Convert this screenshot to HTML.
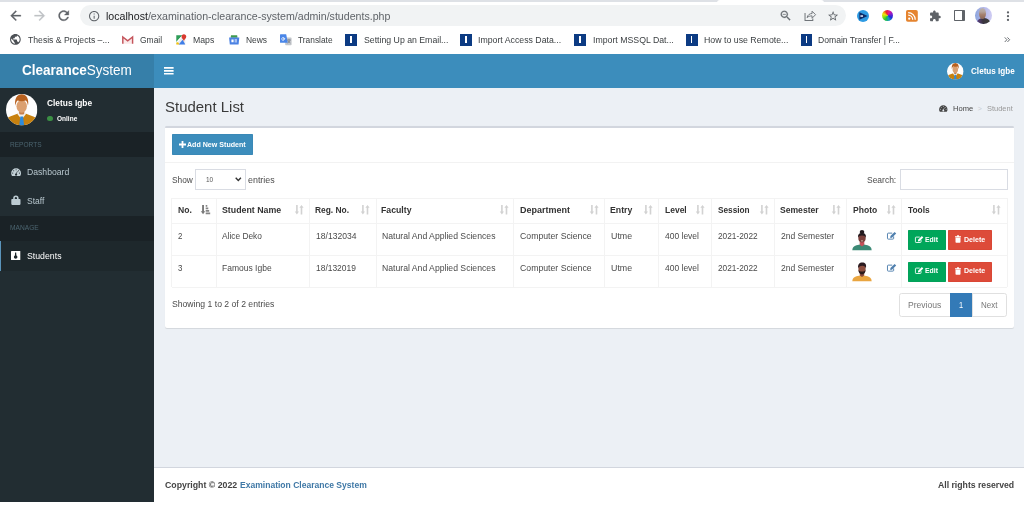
<!DOCTYPE html>
<html>
<head>
<meta charset="utf-8">
<title>Student List</title>
<style>
*{box-sizing:border-box;margin:0;padding:0}
html,body{width:1024px;height:523px;overflow:hidden;background:#fff}
body{font-family:"Liberation Sans",sans-serif;font-size:9px;color:#333;position:relative}
.a{position:absolute}
.t{position:absolute;white-space:nowrap;line-height:12px;height:12px;transform-origin:0 50%}
svg{position:absolute;overflow:visible}
b{font-weight:bold}

.fav{position:absolute;top:33.8px;width:11.8px;height:11.8px;background:#0c3b83}
.fav:after{content:"";position:absolute;left:5px;top:2.2px;width:1.7px;height:7.4px;background:#fff}
</style>
</head>
<body>

<div class="a" style="left:0;top:0;width:1024px;height:2.4px;background:#dee1e6"></div>
<div class="a" style="left:717px;top:0;width:107px;height:3px;background:#fff;border-radius:3px 3px 0 0"></div>
<div class="a" style="left:80px;top:5.4px;width:766.4px;height:20.8px;border-radius:10.4px;background:#f1f3f4"></div>
<div class="a" style="left:0;top:54px;width:154px;height:33.8px;background:#367fa9"></div>
<div class="a" style="left:154px;top:54px;width:870px;height:33.8px;background:#3c8dbc"></div>
<div class="a" style="left:0;top:87.8px;width:154px;height:413.900px;background:#222d32"></div>
<div class="a" style="left:154px;top:87.8px;width:870px;height:380px;background:#ecf0f5"></div>
<div class="a" style="left:154px;top:467.4px;width:870px;height:33.8px;background:#fff;border-top:1px solid #d2d6de"></div>
<div class="a" style="left:0;top:131.6px;width:154px;height:25px;background:#1a2226"></div>
<div class="a" style="left:0;top:216.2px;width:154px;height:25px;background:#1a2226"></div>
<div class="a" style="left:0;top:241.2px;width:154px;height:29.6px;background:#1e282c;border-left:1.4px solid #5a94bb"></div>
<div class="a" style="left:164.8px;top:126px;width:849px;height:202px;background:#fff;border-top:2px solid #d2d6de;border-radius:2px;box-shadow:0 0.7px 0.7px rgba(0,0,0,.1)"></div>
<div class="a" style="left:164.8px;top:162px;width:849px;height:0.8px;background:#f2f2f2"></div>
<div class="a" style="left:172.1px;top:134.3px;width:80.7px;height:20.9px;background:#3c8dbc;border:0.7px solid #3a89b7;border-radius:0.8px"></div>
<div class="a" style="left:195.2px;top:169px;width:50.5px;height:20.600px;background:#fff;border:0.8px solid #d9dce3"></div>
<div class="a" style="left:899.6px;top:169px;width:108px;height:20.600px;background:#fff;border:0.8px solid #d9dce3"></div>

<div class="a" style="left:171.25px;top:197.7px;width:0.8px;height:89.8px;background:#f3f3f3"></div>
<div class="a" style="left:216.15px;top:197.7px;width:0.8px;height:89.8px;background:#f3f3f3"></div>
<div class="a" style="left:308.85px;top:197.7px;width:0.8px;height:89.8px;background:#f3f3f3"></div>
<div class="a" style="left:376.25px;top:197.7px;width:0.8px;height:89.8px;background:#f3f3f3"></div>
<div class="a" style="left:513.45px;top:197.7px;width:0.8px;height:89.8px;background:#f3f3f3"></div>
<div class="a" style="left:604.35px;top:197.7px;width:0.8px;height:89.8px;background:#f3f3f3"></div>
<div class="a" style="left:657.75px;top:197.7px;width:0.8px;height:89.8px;background:#f3f3f3"></div>
<div class="a" style="left:710.85px;top:197.7px;width:0.8px;height:89.8px;background:#f3f3f3"></div>
<div class="a" style="left:774.05px;top:197.7px;width:0.8px;height:89.8px;background:#f3f3f3"></div>
<div class="a" style="left:845.85px;top:197.7px;width:0.8px;height:89.8px;background:#f3f3f3"></div>
<div class="a" style="left:901.45px;top:197.7px;width:0.8px;height:89.8px;background:#f3f3f3"></div>
<div class="a" style="left:1006.95px;top:197.7px;width:0.8px;height:89.8px;background:#f3f3f3"></div>
<div class="a" style="left:171.6px;top:197.7px;width:835.8px;height:0.8px;background:#f3f3f3"></div>
<div class="a" style="left:171.6px;top:222.6px;width:835.8px;height:1.4px;background:#f3f3f3"></div>
<div class="a" style="left:171.6px;top:255px;width:835.8px;height:0.8px;background:#f3f3f3"></div>
<div class="a" style="left:171.6px;top:287.2px;width:835.8px;height:0.8px;background:#f3f3f3"></div>
<div class="a" style="left:908px;top:229.8px;width:38px;height:20.2px;background:#00a65a;border:0.7px solid #03a15a;border-radius:0.8px"></div>
<div class="a" style="left:947.5px;top:229.8px;width:44.600px;height:20.2px;background:#dd4b39;border:0.7px solid #da4735;border-radius:0.8px"></div>
<div class="a" style="left:908px;top:261.5px;width:38px;height:20.2px;background:#00a65a;border:0.7px solid #03a15a;border-radius:0.8px"></div>
<div class="a" style="left:947.5px;top:261.5px;width:44.600px;height:20.2px;background:#dd4b39;border:0.7px solid #da4735;border-radius:0.8px"></div>


<div class="a" style="left:899.4px;top:293.2px;width:107.3px;height:23.4px;background:#fff;border:0.8px solid #e0e0e0;border-radius:2.6px"></div>
<div class="a" style="left:950px;top:293.2px;width:22.2px;height:23.4px;background:#337ab7"></div>
<div class="a" style="left:972.2px;top:293.2px;width:0.8px;height:23.4px;background:#e0e0e0"></div>

<svg style="left:8.00px;top:8.00px" width="15.4" height="15.4" viewBox="0 0 24 24"><path fill="#5f6368" stroke="#5f6368" stroke-width="0.5" d="M20 11H7.83l5.59-5.59L12 4l-8 8 8 8 1.41-1.41L7.83 13H20v-2z"/></svg>
<svg style="left:32.00px;top:8.00px" width="15.4" height="15.4" viewBox="0 0 24 24"><path fill="#bfc2c6" stroke="#bfc2c6" stroke-width="0.5" d="M12 4l-1.41 1.41L16.17 11H4v2h12.17l-5.58 5.59L12 20l8-8z"/></svg>
<svg style="left:56.30px;top:8.00px" width="15.4" height="15.4" viewBox="0 0 24 24"><path fill="#5f6368" stroke="#5f6368" stroke-width="0.5" d="M17.65 6.35C16.2 4.9 14.21 4 12 4c-4.42 0-7.99 3.58-7.99 8s3.57 8 7.99 8c3.73 0 6.84-2.55 7.73-6h-2.08c-.82 2.33-3.04 4-5.65 4-3.31 0-6-2.69-6-6s2.69-6 6-6c1.66 0 3.14.69 4.22 1.78L13 11h7V4l-2.35 2.35z"/></svg>
<svg style="left:87.95px;top:9.75px" width="12.3" height="12.3" viewBox="0 0 24 24"><path fill="#5f6368" stroke="#5f6368" stroke-width="0" d="M11 17h2v-6h-2v6zm1-15C6.48 2 2 6.48 2 12s4.48 10 10 10 10-4.48 10-10S17.52 2 12 2zm0 18c-4.41 0-8-3.59-8-8s3.59-8 8-8 8 3.59 8 8-3.59 8-8 8zM11 9h2V7h-2v2z"/></svg>
<svg style="left:778.80px;top:9.00px" width="13.4" height="13.4" viewBox="0 0 24 24"><path fill="#6a6f74" stroke="#6a6f74" stroke-width="0.4" d="M15.5 14h-.79l-.28-.27C15.41 12.59 16 11.11 16 9.5 16 5.91 13.09 3 9.5 3S3 5.91 3 9.5 5.91 16 9.5 16c1.61 0 3.09-.59 4.23-1.57l.27.28v.79l5 4.99L20.49 19l-4.99-5zm-6 0C7.01 14 5 11.99 5 9.5S7.01 5 9.5 5 14 7.01 14 9.5 11.99 14 9.5 14zM7 9h5v1H7z"/></svg>
<svg style="left:802.6px;top:9px" width="14.8" height="14" viewBox="0 0 16 14" preserveAspectRatio="none"><path d="M2.2 4v7.5h8.4V9.6" fill="none" stroke="#70757a" stroke-width="1.1"/><path d="M4.4 8.6C5 5.9 7.2 4.6 9.8 4.5V2.2l3.8 3.5-3.8 3.5V6.9C7.7 6.9 5.9 7.3 4.4 8.6z" fill="none" stroke="#70757a" stroke-width="1" stroke-linejoin="round"/></svg>
<svg style="left:827.40px;top:10.00px" width="12.2" height="12.2" viewBox="0 0 24 24"><path fill="#5f6368" stroke="#5f6368" stroke-width="0" d="M22 9.24l-7.19-.62L12 2 9.19 8.63 2 9.24l5.46 4.73L5.82 21 12 17.27 18.18 21l-1.63-7.03L22 9.24zM12 15.4l-3.76 2.27 1-4.28-3.32-2.88 4.38-.38L12 6.1l1.71 4.04 4.38.38-3.32 2.88 1 4.28L12 15.4z"/></svg>
<svg style="left:857.3px;top:9.6px" width="12" height="12" viewBox="0 0 12 12"><circle cx="6" cy="6" r="6" fill="#2e9be3"/><path d="M2.4 2.2L10.6 6 2.4 9.8z" fill="#0d2a66"/><rect x="3.4" y="5.3" width="2.6" height="1.5" fill="#e8eefc"/></svg>
<div class="a" style="left:881.9px;top:10.1px;width:10.9px;height:10.9px;border-radius:50%;background:conic-gradient(from -20deg,#e8202a,#e0189a 14%,#7a1fd0 26%,#1a2fd8 38%,#1596c8 50%,#18c040 62%,#9adf10 76%,#f2e010 86%,#f08a18 94%,#e8202a)"></div>
<svg style="left:905.5px;top:9.9px" width="11.8" height="11.8" viewBox="0 0 12 12"><rect width="12" height="12" rx="1.8" fill="#e5842f"/><circle cx="3.3" cy="8.8" r="1.15" fill="#fff"/><path d="M2.2 5.2a4.6 4.6 0 0 1 4.6 4.6M2.2 2.6a7.2 7.2 0 0 1 7.2 7.2" fill="none" stroke="#fff" stroke-width="1.3"/></svg>
<svg style="left:929.05px;top:9.65px" width="12.3" height="12.3" viewBox="0 0 24 24"><path fill="#5f6368" stroke="#5f6368" stroke-width="0" d="M20.5 11H19V7c0-1.1-.9-2-2-2h-4V3.5C13 2.12 11.88 1 10.5 1S8 2.12 8 3.5V5H4c-1.1 0-1.99.9-1.99 2v3.8H3.5c1.49 0 2.7 1.21 2.7 2.7s-1.21 2.7-2.7 2.7H2V20c0 1.1.9 2 2 2h3.8v-1.5c0-1.49 1.21-2.7 2.7-2.7 1.49 0 2.7 1.21 2.7 2.7V22H17c1.1 0 2-.9 2-2v-4h1.5c1.38 0 2.5-1.12 2.5-2.5S21.88 11 20.5 11z"/></svg>
<div class="a" style="left:954px;top:10.4px;width:11px;height:10.5px;border:1.4px solid #5f6368;border-right-width:3.6px;border-radius:0.8px"></div>
<div class="a" style="left:975.1px;top:7.4px;width:16.7px;height:16.7px;border-radius:50%;overflow:hidden;background:linear-gradient(90deg,#8ea6dd,#b4b8ea 55%,#d0cdf3)"><div class="a" style="left:1.800px;top:11px;width:13.400px;height:9px;border-radius:50% 50% 0 0;background:linear-gradient(90deg,#5f4285,#3a3340 45%,#3f4038)"></div><div class="a" style="left:3.900px;top:0.700px;width:7.400px;height:11.400px;border-radius:50%;background:linear-gradient(#bdb3b0,#b3a29b 35%,#a5806f 60%,#8b6858)"></div></div>
<svg style="left:1006px;top:10px" width="4" height="12" viewBox="0 0 4 12"><circle cx="2" cy="2.400" r="1.150" fill="#5f6368"/><circle cx="2" cy="6.200" r="1.150" fill="#5f6368"/><circle cx="2" cy="9.950" r="1.150" fill="#5f6368"/></svg>
<svg style="left:9.20px;top:33.10px" width="12.8" height="12.8" viewBox="0 0 24 24"><path fill="#4d5156" stroke="#4d5156" stroke-width="0" d="M12 2C6.48 2 2 6.48 2 12s4.48 10 10 10 10-4.48 10-10S17.52 2 12 2zm-1 17.93c-3.95-.49-7-3.85-7-7.93 0-.62.08-1.21.21-1.79L9 15v1c0 1.1.9 2 2 2v1.93zm6.9-2.54c-.26-.81-1-1.39-1.9-1.39h-1v-3c0-.55-.45-1-1-1H8v-2h2c.55 0 1-.45 1-1V7h2c1.1 0 2-.9 2-2v-.41c2.93 1.19 5 4.06 5 7.41 0 2.08-.8 3.97-2.1 5.39z"/></svg>
<svg style="left:121.700px;top:35.900px" width="11.400" height="7.900" viewBox="0 0 11.400 7.900"><path d="M0.800 7.700V0.900L5.700 4.700 10.600 0.900V7.700z" fill="#fbeaea"/><path d="M0.800 7.800V1L5.700 4.800 10.600 1V7.800" fill="none" stroke="#c4545b" stroke-width="1.450" stroke-linejoin="miter"/></svg>
<svg style="left:176px;top:34.200px" width="10.400" height="10.600" viewBox="0 0 10.400 10.600"><path d="M0.300 1.300h9v9.100h-9z" fill="#e9ebee"/><path d="M0.300 1.300h6L0.300 7.900z" fill="#2f9e58"/><path d="M0.300 8.800l1.200-1.300 2.200 2.900H0.300z" fill="#f4c20d"/><path d="M2.700 10.400L6.600 5.800 9.300 10.400z" fill="#3f7ee8"/><path d="M0.300 8L6.300 1.300h1.300L1 8.800z" fill="#fff"/><path d="M7.900 0.200c1.400 0 2.400 1 2.400 2.300 0 1.600-1.800 2.800-2.400 4.400C7.300 5.300 5.500 4.100 5.500 2.500 5.500 1.200 6.500 0.200 7.900 0.200z" fill="#d93a2f"/></svg>
<svg style="left:228.5px;top:34.9px" width="10.4" height="9.8" viewBox="0 0 10.4 9.8"><path d="M2 0.2h6.2l0.3 2.6H1.7z" fill="#3f9a4e"/><path d="M0.1 2.4h10.2L9.6 9.6H0.8z" fill="#4b82e3"/><path d="M2.4 4.6h2.2v2.6H2.4zM5.6 4.6h2.4v0.8H5.6zM5.6 6.4h2.4v0.8H5.6z" fill="#fff"/></svg>
<svg style="left:279.8px;top:33.9px" width="11.8" height="11.4" viewBox="0 0 11.8 11.4"><rect x="5.2" y="3.6" width="6.4" height="7.6" rx="0.8" fill="#c3c6cb"/><path d="M0.6 0.2h5.6l1.6 8.6H0.6a0.6 0.6 0 0 1-.6-.6V0.8a0.6 0.6 0 0 1 .6-.6z" fill="#4a86e8"/><path d="M5.2 4.4H3.6v0.9h0.8c-.1.6-.6 1-1.2 1a1.4 1.4 0 1 1 .9-2.4" fill="none" stroke="#fff" stroke-width="0.8"/><path d="M7.2 6h3.6M9 5.2v0.8M8 6.4c.4 1.2 1.2 2 2.4 2.6M10 6.2c-.3 1.2-1.100 2.200-2.400 2.900" fill="none" stroke="#6b6f76" stroke-width="0.6"/></svg>
<div class="fav" style="left:345.1px"></div>
<div class="fav" style="left:460.1px"></div>
<div class="fav" style="left:574.2px"></div>
<div class="fav" style="left:685.8px"></div>
<div class="fav" style="left:800.5px"></div>
<svg style="left:1003.6px;top:37.2px" width="6.4" height="5.4" viewBox="0 0 7 6.4"><path d="M0.6 0.5L3.2 3.2 0.6 5.9M3.8 0.5L6.4 3.2 3.8 5.9" fill="none" stroke="#5f6368" stroke-width="1.1"/></svg>
<svg style="left:164.4px;top:66.9px" width="9.6" height="7.8" viewBox="0 0 9.6 7.8"><path d="M0 0h9.600v1.700H0zM0 2.950h9.600v1.700H0zM0 5.900h9.600v1.700H0z" fill="#fff"/></svg>
<svg style="left:5.7px;top:94.2px" width="31.4" height="31.4" viewBox="0 0 31.4 31.4"><defs><clipPath id="c1"><circle cx="15.7" cy="15.7" r="15.7"/></clipPath></defs><g clip-path="url(#c1)"><rect width="31.4" height="31.4" fill="#fdfdfd"/><path d="M1.5 31.4V25.5c0-1.800 1-2.600 2.600-3.100L12 19.600h7.400l7.900 2.800c1.600.5 2.600 1.300 2.600 3.100v5.900z" fill="#c8810e"/><path d="M11.200 19.800l4.500 5.600 4.500-5.600-1.200-1.500h-6.600z" fill="#f4f1ec"/><path d="M14.300 22.400h2.800l1 9h-4.800z" fill="#2f8bdb"/><rect x="13.100" y="16" width="5.200" height="4.600" rx="1.500" fill="#c57f4c"/><ellipse cx="15.700" cy="12.300" rx="5.200" ry="6.400" fill="#dba070"/><path d="M9.400 11.800C8.200 5.500 10.500 0.200 15.700 0.200s7.500 5.300 6.300 11.600c-.3-2.600-1.100-4.300-2.200-5.200-2.400.8-5.800.8-8.200 0-1.100.9-1.900 2.600-2.200 5.200z" fill="#b8611f"/></g></svg>
<svg style="left:946.7px;top:63.2px" width="16.6" height="16.6" viewBox="0 0 31.4 31.4"><defs><clipPath id="c2"><circle cx="15.7" cy="15.7" r="15.7"/></clipPath></defs><g clip-path="url(#c2)"><rect width="31.4" height="31.4" fill="#fdfdfd"/><path d="M1.5 31.4V25.5c0-1.800 1-2.600 2.600-3.100L12 19.600h7.400l7.900 2.800c1.600.5 2.600 1.300 2.600 3.100v5.900z" fill="#c8810e"/><path d="M11.200 19.800l4.500 5.600 4.500-5.600-1.200-1.500h-6.600z" fill="#f4f1ec"/><path d="M14.300 22.400h2.800l1 9h-4.800z" fill="#2f8bdb"/><rect x="13.100" y="16" width="5.200" height="4.600" rx="1.500" fill="#c57f4c"/><ellipse cx="15.700" cy="12.300" rx="5.200" ry="6.400" fill="#dba070"/><path d="M9.400 11.800C8.200 5.500 10.500 0.200 15.700 0.200s7.500 5.300 6.300 11.600c-.3-2.600-1.100-4.300-2.200-5.200-2.400.8-5.800.8-8.200 0-1.100.9-1.900 2.600-2.200 5.200z" fill="#b8611f"/></g></svg>
<div class="a" style="left:46.9px;top:115.500px;width:5.700px;height:5.700px;border-radius:50%;background:#3b8f44"></div>
<svg style="left:11.2px;top:167.8px" width="10.2" height="8" viewBox="0 0 14 11"><path d="M7 0.300A6.800 6.800 0 0 0 0.200 7.100c0 1.300.4 2.500 1 3.500.1.200.3.300.500.300h10.600c.2 0 .4-.1.500-.3.600-1 1-2.200 1-3.500A6.800 6.800 0 0 0 7 .3z" fill="#c2d0d6"/><g fill="#222d32"><circle cx="2.400" cy="7" r=".75"/><circle cx="3.700" cy="3.800" r=".75"/><circle cx="7" cy="2.500" r=".75"/><circle cx="10.300" cy="3.800" r=".75"/><circle cx="11.600" cy="7" r=".75"/><path d="M8.400 4.200l-1.300 3.300a1.500 1.500 0 1 0 .8.300l1.200-3.400z"/></g></svg>
<svg style="left:939.4px;top:104.8px" width="8.6" height="6.8" viewBox="0 0 14 11"><path d="M7 0.300A6.800 6.800 0 0 0 0.200 7.100c0 1.300.4 2.500 1 3.500.1.200.3.300.500.300h10.600c.2 0 .4-.1.500-.3.600-1 1-2.200 1-3.500A6.800 6.800 0 0 0 7 .3z" fill="#444"/><g fill="#ecf0f5"><circle cx="2.400" cy="7" r=".75"/><circle cx="3.700" cy="3.800" r=".75"/><circle cx="7" cy="2.500" r=".75"/><circle cx="10.300" cy="3.800" r=".75"/><circle cx="11.600" cy="7" r=".75"/><path d="M8.400 4.200l-1.300 3.300a1.500 1.500 0 1 0 .8.300l1.200-3.400z"/></g></svg>
<svg style="left:11.2px;top:195px" width="9.8" height="10" viewBox="0 0 9.8 10"><path d="M3 4.400V3.100a1.900 1.900 0 0 1 3.800 0v1.300" fill="none" stroke="#bccbd2" stroke-width="1.600"/><rect x="0.300" y="3.900" width="9.200" height="6" rx="0.800" fill="#bccbd2"/></svg>
<svg style="left:10.9px;top:250.800px" width="9.300" height="9" viewBox="0 0 9.300 9"><rect width="9.300" height="9" rx="0.500" fill="#fff"/><path d="M4.100 1.500h1.100l.2 3.100c.6.300 1 .8 1 1.500 0 .9-.8 1.600-1.750 1.600S2.900 7 2.900 6.100c0-.7.400-1.200 1-1.500z" fill="#1e282c"/></svg>
<div class="t" style="left:977.8px;top:103.300px;font-size:7px;color:#c8ccd2">&gt;</div>
<svg style="left:179px;top:141.400px" width="7" height="7" viewBox="0 0 7 7"><path d="M2.600 0h1.800v2.600H7v1.800H4.400V7H2.600V4.400H0V2.600h2.600z" fill="#fff"/></svg>
<svg style="left:235.200px;top:177.200px" width="6.600" height="4.600" viewBox="0 0 6.600 4.600"><path d="M0.700 0.800L3.300 3.500 5.900 0.800" fill="none" stroke="#333" stroke-width="1.400"/></svg>
<svg style="left:201.4px;top:204.900px" width="9.200" height="9.200" viewBox="0 0 9.200 9.200"><path d="M1.100 0h1.900v6.300h1.300L2.050 9.200 -0.200 6.300h1.300z" fill="#7a7a7a"/><path d="M4.700 0.100h1.600v1.600H4.700zM4.700 2.600h2.600v1.600H4.700zM4.700 5.100h3.500v1.600H4.700zM4.700 7.600h4.500v1.600H4.700z" fill="#858585"/></svg>
<svg style="left:295.2px;top:204.900px" width="8.400" height="9.400" viewBox="0 0 8.400 9.400"><path d="M1.100 0h1.600v6.600h1.300L1.900 9.400 -0.200 6.600h1.300z" fill="#d2d2d2"/><path d="M5.700 9.400h1.600V2.800h1.300L6.500 0 4.400 2.800h1.300z" fill="#d2d2d2"/></svg>
<svg style="left:361.4px;top:204.900px" width="8.400" height="9.400" viewBox="0 0 8.400 9.400"><path d="M1.100 0h1.600v6.600h1.300L1.900 9.400 -0.200 6.600h1.300z" fill="#d2d2d2"/><path d="M5.700 9.400h1.600V2.800h1.300L6.500 0 4.400 2.800h1.300z" fill="#d2d2d2"/></svg>
<svg style="left:499.6px;top:204.900px" width="8.400" height="9.400" viewBox="0 0 8.400 9.400"><path d="M1.100 0h1.600v6.600h1.300L1.900 9.400 -0.200 6.600h1.300z" fill="#d2d2d2"/><path d="M5.700 9.400h1.600V2.800h1.300L6.500 0 4.400 2.800h1.300z" fill="#d2d2d2"/></svg>
<svg style="left:590.2px;top:204.900px" width="8.400" height="9.400" viewBox="0 0 8.400 9.400"><path d="M1.100 0h1.600v6.600h1.300L1.900 9.400 -0.200 6.600h1.300z" fill="#d2d2d2"/><path d="M5.700 9.400h1.600V2.800h1.300L6.500 0 4.400 2.800h1.300z" fill="#d2d2d2"/></svg>
<svg style="left:644.2px;top:204.900px" width="8.400" height="9.400" viewBox="0 0 8.400 9.400"><path d="M1.100 0h1.600v6.600h1.300L1.900 9.400 -0.200 6.600h1.300z" fill="#d2d2d2"/><path d="M5.700 9.400h1.600V2.800h1.300L6.500 0 4.400 2.800h1.300z" fill="#d2d2d2"/></svg>
<svg style="left:696.4px;top:204.900px" width="8.400" height="9.400" viewBox="0 0 8.400 9.400"><path d="M1.100 0h1.600v6.600h1.300L1.900 9.400 -0.200 6.600h1.300z" fill="#d2d2d2"/><path d="M5.700 9.400h1.600V2.800h1.300L6.500 0 4.400 2.800h1.300z" fill="#d2d2d2"/></svg>
<svg style="left:760.1px;top:204.900px" width="8.400" height="9.400" viewBox="0 0 8.400 9.400"><path d="M1.100 0h1.600v6.600h1.300L1.900 9.400 -0.200 6.600h1.300z" fill="#d2d2d2"/><path d="M5.700 9.400h1.600V2.800h1.300L6.500 0 4.400 2.800h1.300z" fill="#d2d2d2"/></svg>
<svg style="left:831.7px;top:204.900px" width="8.400" height="9.400" viewBox="0 0 8.400 9.400"><path d="M1.100 0h1.600v6.600h1.300L1.900 9.400 -0.200 6.600h1.300z" fill="#d2d2d2"/><path d="M5.700 9.400h1.600V2.800h1.300L6.500 0 4.400 2.800h1.300z" fill="#d2d2d2"/></svg>
<svg style="left:887.3px;top:204.900px" width="8.400" height="9.400" viewBox="0 0 8.400 9.400"><path d="M1.100 0h1.600v6.600h1.300L1.900 9.400 -0.200 6.600h1.300z" fill="#d2d2d2"/><path d="M5.700 9.400h1.600V2.800h1.300L6.500 0 4.400 2.800h1.300z" fill="#d2d2d2"/></svg>
<svg style="left:992.2px;top:204.900px" width="8.400" height="9.400" viewBox="0 0 8.400 9.400"><path d="M1.100 0h1.600v6.600h1.300L1.900 9.400 -0.200 6.600h1.300z" fill="#d2d2d2"/><path d="M5.700 9.400h1.600V2.800h1.300L6.500 0 4.400 2.800h1.300z" fill="#d2d2d2"/></svg>
<svg style="left:887px;top:231.8px" width="9.5" height="7.6" viewBox="0 0 10 8"><path d="M7 4.600v2.100a.8.800 0 0 1-.8.800H1.300a.8.800 0 0 1-.8-.8V2a.8.800 0 0 1 .8-.8h4.200" fill="none" stroke="#4f7fae" stroke-width="1"/><path d="M3.600 4.300L8 0l1.700 1.600L5.200 6 3.400 6.300z" fill="#4f7fae"/></svg>
<svg style="left:914.8px;top:235.7px" width="8.6" height="7" viewBox="0 0 10 8"><path d="M7 4.600v2.100a.8.800 0 0 1-.8.800H1.300a.8.800 0 0 1-.8-.8V2a.8.800 0 0 1 .8-.8h4.200" fill="none" stroke="#fff" stroke-width="1"/><path d="M3.600 4.300L8 0l1.700 1.600L5.200 6 3.400 6.300z" fill="#fff"/></svg>
<svg style="left:955.3px;top:235.4px" width="6" height="7.800" viewBox="0 0 6 7.800"><path d="M0 1.200h1.800L2.200 0.200h1.600l.4 1H6v1H0z" fill="#fff"/><path d="M0.500 2.600h5v4.400a.7.700 0 0 1-.7.700H1.200a.7.700 0 0 1-.7-.7z" fill="#fff"/></svg>
<svg style="left:887px;top:263.5px" width="9.5" height="7.6" viewBox="0 0 10 8"><path d="M7 4.600v2.100a.8.800 0 0 1-.8.800H1.300a.8.800 0 0 1-.8-.8V2a.8.800 0 0 1 .8-.8h4.200" fill="none" stroke="#4f7fae" stroke-width="1"/><path d="M3.600 4.300L8 0l1.700 1.600L5.200 6 3.400 6.300z" fill="#4f7fae"/></svg>
<svg style="left:914.8px;top:267.4px" width="8.6" height="7" viewBox="0 0 10 8"><path d="M7 4.600v2.100a.8.800 0 0 1-.8.800H1.300a.8.800 0 0 1-.8-.8V2a.8.800 0 0 1 .8-.8h4.200" fill="none" stroke="#fff" stroke-width="1"/><path d="M3.600 4.300L8 0l1.700 1.600L5.200 6 3.400 6.300z" fill="#fff"/></svg>
<svg style="left:955.3px;top:267.1px" width="6" height="7.800" viewBox="0 0 6 7.800"><path d="M0 1.200h1.800L2.200 0.200h1.600l.4 1H6v1H0z" fill="#fff"/><path d="M0.500 2.600h5v4.400a.7.700 0 0 1-.7.700H1.200a.7.700 0 0 1-.7-.7z" fill="#fff"/></svg>
<svg style="left:852.4px;top:229.7px" width="20" height="20.2" viewBox="0 0 20 20.2"><path d="M0.300 20.200c.2-2.700 1.500-4.300 4.200-4.900l3.600-.7h3.800l3.600.7c2.700.6 4 2.200 4.200 4.900z" fill="#3c8a76"/><path d="M7.700 11.400h4.600v3.300L10 16.600 7.700 14.700z" fill="#c3525a"/><ellipse cx="10" cy="8" rx="3.700" ry="4.400" fill="#7a3f3a"/><path d="M6.100 7.800C5.700 4.400 7.400 3.100 10 3.100s4.300 1.300 3.900 4.700c-.6-1.500-1.400-2.300-3.900-2.300S6.700 6.300 6.100 7.800z" fill="#231a1e"/><ellipse cx="10" cy="2" rx="2.300" ry="1.900" fill="#231a1e"/><path d="M8.900 10.500h2.200c-.2.600-.6.900-1.100.9s-.9-.3-1.100-.9z" fill="#e9cfc9"/></svg>
<svg style="left:852.400px;top:261.4px" width="20" height="20.200" viewBox="0 0 20 20.200"><path d="M0.300 20.200c.2-2.900 1.500-4.400 4.200-5l3.600-.8h3.800l3.600.8c2.700.6 4 2.100 4.200 5z" fill="#e9a540"/><path d="M7.800 12h4.400v2.600L10 16 7.800 14.600z" fill="#8a4b3c"/><ellipse cx="10" cy="8" rx="3.600" ry="4.500" fill="#8d4e3f"/><path d="M6.400 8.600c.1 3.400 1.600 4.800 3.600 4.800s3.500-1.400 3.600-4.800c-.6 1.400-1.400 2-3.600 2s-3-.6-3.600-2z" fill="#2a1a1c"/><path d="M6.200 7.600C5.600 3.200 7.400 1.500 10.400 1.500c2.600 0 4.400 1.300 3.500 6.100-.5-2-1.200-2.800-3.500-2.800-2.600 0-3.600.8-4.200 2.800z" fill="#2b1b20"/></svg>
<div class="a" style="left:0;top:0;width:1024px;height:523px;will-change:transform">
<div class="t" style="left:106.47px;top:9.80px;font-size:10.7px;color:#202124;transform:scaleX(0.9931)">localhost<span style="color:#5f6368">/examination-clearance-system/admin/students.php</span></div>
<div class="t" style="left:27.80px;top:33.60px;font-size:9.6px;color:#3c4043;transform:scaleX(0.9003)">Thesis &amp; Projects –...</div>
<div class="t" style="left:140.00px;top:33.60px;font-size:9.5px;color:#3c4043;transform:scaleX(0.8908)">Gmail</div>
<div class="t" style="left:193.00px;top:33.60px;font-size:9.5px;color:#3c4043;transform:scaleX(0.9157)">Maps</div>
<div class="t" style="left:245.70px;top:33.60px;font-size:9.5px;color:#3c4043;transform:scaleX(0.8873)">News</div>
<div class="t" style="left:298.20px;top:33.60px;font-size:9.5px;color:#3c4043;transform:scaleX(0.8803)">Translate</div>
<div class="t" style="left:363.70px;top:33.60px;font-size:9.5px;color:#3c4043;transform:scaleX(0.9185)">Setting Up an Email...</div>
<div class="t" style="left:478.20px;top:33.60px;font-size:9.5px;color:#3c4043;transform:scaleX(0.9205)">Import Access Data...</div>
<div class="t" style="left:592.50px;top:33.60px;font-size:9.5px;color:#3c4043;transform:scaleX(0.9198)">Import MSSQL Dat...</div>
<div class="t" style="left:704.20px;top:33.60px;font-size:9.5px;color:#3c4043;transform:scaleX(0.9239)">How to use Remote...</div>
<div class="t" style="left:818.10px;top:33.60px;font-size:9.5px;color:#3c4043;transform:scaleX(0.9039)">Domain Transfer | F...</div>
<div class="t" style="left:21.62px;top:64.40px;font-size:13.9px;color:#fff;transform:scaleX(0.9745)"><b>Clearance</b>System</div>
<div class="t" style="left:970.50px;top:65.40px;font-size:9.2px;color:#fff;transform:scaleX(0.8845);font-weight:bold">Cletus Igbe</div>
<div class="t" style="left:46.70px;top:96.80px;font-size:9.4px;color:#fff;transform:scaleX(0.8924);font-weight:bold">Cletus Igbe</div>
<div class="t" style="left:56.70px;top:112.90px;font-size:7.5px;color:#fff;transform:scaleX(0.8677);font-weight:bold">Online</div>
<div class="t" style="left:9.50px;top:138.50px;font-size:7.6px;color:#4b646f;transform:scaleX(0.8629)">REPORTS</div>
<div class="t" style="left:27.20px;top:165.60px;font-size:8.8px;color:#b8c7ce;transform:scaleX(0.9828)">Dashboard</div>
<div class="t" style="left:27.20px;top:195.20px;font-size:8.8px;color:#b8c7ce;transform:scaleX(0.9681)">Staff</div>
<div class="t" style="left:9.50px;top:222.40px;font-size:7.6px;color:#4b646f;transform:scaleX(0.8738)">MANAGE</div>
<div class="t" style="left:27.00px;top:249.60px;font-size:8.8px;color:#fff;transform:scaleX(0.9936)">Students</div>
<div class="t" style="left:165.20px;top:101.20px;font-size:15.2px;color:#3a3a3a;transform:scaleX(0.9853)">Student List</div>
<div class="t" style="left:952.80px;top:103.30px;font-size:7.6px;color:#444;transform:scaleX(0.9934)">Home</div>
<div class="t" style="left:987.10px;top:103.30px;font-size:7.6px;color:#999;transform:scaleX(0.9827)">Student</div>
<div class="t" style="left:187.30px;top:139.20px;font-size:7.9px;color:#fff;transform:scaleX(0.8982);font-weight:bold">Add New Student</div>
<div class="t" style="left:172.10px;top:173.50px;font-size:8.8px;color:#4a4a4a;transform:scaleX(0.9447)">Show</div>
<div class="t" style="left:205.90px;top:173.80px;font-size:7.2px;color:#555;transform:scaleX(0.9003)">10</div>
<div class="t" style="left:248.30px;top:173.50px;font-size:8.8px;color:#4a4a4a;transform:scaleX(1.0109)">entries</div>
<div class="t" style="left:866.50px;top:173.60px;font-size:8.8px;color:#4a4a4a;transform:scaleX(0.9641)">Search:</div>
<div class="t" style="left:177.50px;top:204.00px;font-size:8.8px;color:#333;transform:scaleX(0.9762);font-weight:bold">No.</div>
<div class="t" style="left:221.90px;top:204.00px;font-size:8.8px;color:#333;transform:scaleX(0.9992);font-weight:bold">Student Name</div>
<div class="t" style="left:315.30px;top:204.00px;font-size:8.8px;color:#333;transform:scaleX(0.9536);font-weight:bold">Reg. No.</div>
<div class="t" style="left:381.40px;top:204.00px;font-size:8.8px;color:#333;transform:scaleX(0.9901);font-weight:bold">Faculty</div>
<div class="t" style="left:519.50px;top:204.00px;font-size:8.8px;color:#333;transform:scaleX(1.0214);font-weight:bold">Department</div>
<div class="t" style="left:610.30px;top:204.00px;font-size:8.8px;color:#333;transform:scaleX(0.9914);font-weight:bold">Entry</div>
<div class="t" style="left:664.90px;top:204.00px;font-size:8.8px;color:#333;transform:scaleX(0.9660);font-weight:bold">Level</div>
<div class="t" style="left:717.80px;top:204.00px;font-size:8.8px;color:#333;transform:scaleX(0.9382);font-weight:bold">Session</div>
<div class="t" style="left:780.40px;top:204.00px;font-size:8.8px;color:#333;transform:scaleX(0.9754);font-weight:bold">Semester</div>
<div class="t" style="left:852.60px;top:204.00px;font-size:8.8px;color:#333;transform:scaleX(0.9709);font-weight:bold">Photo</div>
<div class="t" style="left:908.10px;top:204.00px;font-size:8.8px;color:#333;transform:scaleX(0.9515);font-weight:bold">Tools</div>
<div class="t" style="left:177.70px;top:230.30px;font-size:8.8px;color:#4a4a4a;transform:scaleX(0.9000)">2</div>
<div class="t" style="left:222.20px;top:230.30px;font-size:8.8px;color:#4a4a4a;transform:scaleX(0.9489)">Alice Deko</div>
<div class="t" style="left:316.00px;top:230.30px;font-size:8.8px;color:#4a4a4a;transform:scaleX(0.9714)">18/132034</div>
<div class="t" style="left:382.00px;top:230.30px;font-size:8.8px;color:#4a4a4a;transform:scaleX(0.9830)">Natural And Applied Sciences</div>
<div class="t" style="left:520.00px;top:230.30px;font-size:8.8px;color:#4a4a4a;transform:scaleX(0.9894)">Computer Science</div>
<div class="t" style="left:611.00px;top:230.30px;font-size:8.8px;color:#4a4a4a;transform:scaleX(1.0036)">Utme</div>
<div class="t" style="left:664.70px;top:230.30px;font-size:8.8px;color:#4a4a4a;transform:scaleX(0.9643)">400 level</div>
<div class="t" style="left:717.50px;top:230.30px;font-size:8.8px;color:#4a4a4a;transform:scaleX(0.9413)">2021-2022</div>
<div class="t" style="left:781.00px;top:230.30px;font-size:8.8px;color:#4a4a4a;transform:scaleX(0.9702)">2nd Semester</div>
<div class="t" style="left:925.10px;top:233.90px;font-size:7.6px;color:#fff;transform:scaleX(0.9046);font-weight:bold">Edit</div>
<div class="t" style="left:963.80px;top:233.90px;font-size:7.6px;color:#fff;transform:scaleX(0.9305);font-weight:bold">Delete</div>
<div class="t" style="left:177.70px;top:261.70px;font-size:8.8px;color:#4a4a4a;transform:scaleX(0.9000)">3</div>
<div class="t" style="left:222.20px;top:261.70px;font-size:8.8px;color:#4a4a4a;transform:scaleX(0.9679)">Famous Igbe</div>
<div class="t" style="left:316.00px;top:261.70px;font-size:8.8px;color:#4a4a4a;transform:scaleX(0.9594)">18/132019</div>
<div class="t" style="left:382.00px;top:261.70px;font-size:8.8px;color:#4a4a4a;transform:scaleX(0.9830)">Natural And Applied Sciences</div>
<div class="t" style="left:520.00px;top:261.70px;font-size:8.8px;color:#4a4a4a;transform:scaleX(0.9894)">Computer Science</div>
<div class="t" style="left:611.00px;top:261.70px;font-size:8.8px;color:#4a4a4a;transform:scaleX(1.0036)">Utme</div>
<div class="t" style="left:664.70px;top:261.70px;font-size:8.8px;color:#4a4a4a;transform:scaleX(0.9643)">400 level</div>
<div class="t" style="left:717.50px;top:261.70px;font-size:8.8px;color:#4a4a4a;transform:scaleX(0.9413)">2021-2022</div>
<div class="t" style="left:781.00px;top:261.70px;font-size:8.8px;color:#4a4a4a;transform:scaleX(0.9702)">2nd Semester</div>
<div class="t" style="left:925.10px;top:265.30px;font-size:7.6px;color:#fff;transform:scaleX(0.9046);font-weight:bold">Edit</div>
<div class="t" style="left:963.80px;top:265.30px;font-size:7.6px;color:#fff;transform:scaleX(0.9305);font-weight:bold">Delete</div>
<div class="t" style="left:171.70px;top:297.90px;font-size:8.8px;color:#4a4a4a;transform:scaleX(0.9822)">Showing 1 to 2 of 2 entries</div>
<div class="t" style="left:907.70px;top:298.90px;font-size:8.8px;color:#777;transform:scaleX(0.9734)">Previous</div>
<div class="t" style="left:958.80px;top:298.90px;font-size:8.8px;color:#fff;transform:scaleX(0.8400)">1</div>
<div class="t" style="left:981.00px;top:298.90px;font-size:8.8px;color:#777;transform:scaleX(0.9065)">Next</div>
<div class="t" style="left:164.80px;top:478.60px;font-size:8.8px;color:#444;transform:scaleX(0.9961);font-weight:bold">Copyright © 2022</div>
<div class="t" style="left:239.50px;top:478.60px;font-size:8.8px;color:#3f78a6;transform:scaleX(0.9708);font-weight:bold">Examination Clearance System</div>
<div class="t" style="left:937.90px;top:478.80px;font-size:8.8px;color:#444;transform:scaleX(0.9860);font-weight:bold">All rights reserved</div>
</div>
</body>
</html>
